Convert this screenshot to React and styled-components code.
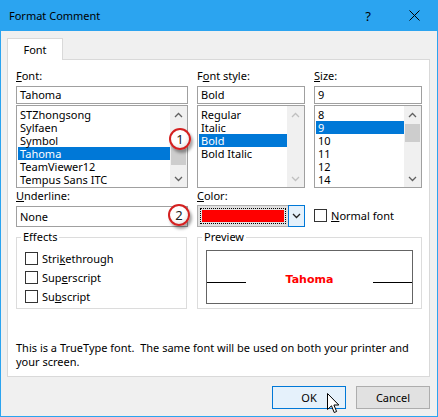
import React from "react";
import styled, { createGlobalStyle } from "styled-components";

const GlobalStyle = createGlobalStyle`
  * { box-sizing: border-box; }
  html, body { margin: 0; padding: 0; background: #fff; }
  body {
    font-family: "Noto Sans", "Open Sans", sans-serif;
    font-size: 11px;
    color: #000;
  }
`;

const Window = styled.div`
  position: relative;
  width: 438px;
  height: 417px;
  display: flex;
  flex-direction: column;
  background: #f0f0f0;
  border: 1px solid #2ba4f0;
  border-top: none;
`;

const TitleBar = styled.div`
  height: 31px;
  flex: none;
  display: flex;
  align-items: center;
  background: #2ba4f0;
  padding-left: 8px;
`;

const Title = styled.div`
  flex: 1;
  font-size: 11px;
  line-height: 31px;
`;

const CaptionButton = styled.div`
  width: 46px;
  height: 31px;
  display: flex;
  align-items: center;
  justify-content: center;
  font-size: 13px;
`;

const Body = styled.div`
  flex: 1;
  display: flex;
  flex-direction: column;
  padding: 7px 7px 0 6px;
`;

const Tab = styled.div`
  position: relative;
  z-index: 1;
  width: 56px;
  height: 22px;
  margin-bottom: -1px;
  background: #fff;
  border: 1px solid #d9d9d9;
  border-bottom: none;
  text-align: center;
  line-height: 22px;
`;

const Panel = styled.div`
  height: 318px;
  background: #fff;
  border: 1px solid #d9d9d9;
  padding: 8px 7px 0 8px;
`;

const Grid = styled.div`
  display: grid;
  grid-template-columns: 172px 108px 108px;
  column-gap: 9px;
`;

const Field = styled.div`
  display: flex;
  flex-direction: column;
`;

const Label = styled.div`
  line-height: 16px;
  margin-bottom: 2px;
  white-space: nowrap;
`;

const Key = styled.span`
  text-decoration: underline;
  text-underline-offset: 1px;
`;

const TextBox = styled.div`
  height: 18px;
  margin-bottom: 1px;
  border: 1px solid #a0a0a0;
  background: #fff;
  padding-left: 3px;
  line-height: 16px;
`;

const ListBox = styled.div`
  height: 83px;
  display: flex;
  border: 1px solid #a0a0a0;
  background: #fff;
`;

const Rows = styled.div`
  flex: 1;
  padding: 2px 0 0 1px;
  overflow: hidden;
`;

const Row = styled.div`
  height: 13px;
  line-height: 13px;
  padding-left: 2px;
  white-space: nowrap;
  background: ${(p) => (p.$selected ? "#0078d7" : "transparent")};
  color: ${(p) => (p.$selected ? "#fff" : "#000")};
`;

const ScrollBar = styled.div`
  width: 17px;
  display: flex;
  flex-direction: column;
  background: #f0f0f0;
`;

const ArrowButton = styled.div`
  height: 17px;
  flex: none;
  display: flex;
  align-items: center;
  justify-content: center;
`;

const Track = styled.div`
  flex: 1;
  padding: ${(p) => p.$offset}px 1px 0;
`;

const Thumb = styled.div`
  height: ${(p) => p.$size}px;
  background: #cdcdcd;
`;

const Combo = styled.div`
  height: 21px;
  border: 1px solid #a0a0a0;
  background: #fff;
  padding-left: 3px;
  line-height: 19px;
`;

const ColorCombo = styled.div`
  height: 22px;
  margin-top: -1px;
  display: flex;
  border: 1px solid #adadad;
  background: #e1e1e1;
`;

const SwatchArea = styled.div`
  flex: 1;
  padding: 2px;
`;

const FocusRect = styled.div`
  height: 100%;
  border: 1px dotted #000;
  padding: 1px;
`;

const Swatch = styled.div`
  height: 100%;
  background: ${(p) => p.$color};
`;

const DropButton = styled.div`
  width: 17px;
  margin: -1px -1px -1px 0;
  display: flex;
  align-items: center;
  justify-content: center;
  border: 1px solid #0078d7;
  background: #e5f1fb;
`;

const CheckRow = styled.label`
  height: 19px;
  display: flex;
  align-items: center;
  gap: 4px;
  white-space: nowrap;
`;

const SideCheck = styled(CheckRow)`
  align-self: end;
  margin-bottom: 2px;
`;

const Box = styled.span`
  width: 13px;
  height: 13px;
  flex: none;
  border: 1px solid #333;
  background: #fff;
`;

const Group = styled.fieldset`
  grid-column: ${(p) => p.$span};
  min-width: 0;
  margin: 3px ${(p) => p.$mr || 0}px 0 0;
  padding: ${(p) => p.$pad};
  border: 1px solid #dcdcdc;
`;

const Legend = styled.legend`
  margin-left: -4px;
  padding: 0 2px;
  line-height: 14px;
`;

const PreviewBox = styled.div`
  height: 54px;
  display: flex;
  align-items: flex-end;
  padding-bottom: 20px;
  border: 1px solid #646464;
`;

const Rule = styled.div`
  width: 39px;
  height: 1px;
  flex: none;
  background: #000;
`;

const Sample = styled.div`
  flex: 1;
  text-align: center;
  margin-bottom: -3px;
  font-family: "DejaVu Sans", Verdana, sans-serif;
  font-weight: bold;
  font-size: 11px;
  line-height: 13px;
  color: ${(p) => p.$color};
`;

const Note = styled.p`
  margin: 32px 0 0;
  line-height: 14px;
`;

const ButtonRow = styled.div`
  display: flex;
  justify-content: flex-end;
  gap: 10px;
  margin-top: 9px;
`;

const Button = styled.div`
  width: 74px;
  height: 23px;
  display: flex;
  align-items: center;
  justify-content: center;
  border: 1px solid ${(p) => (p.$default ? "#0078d7" : "#adadad")};
  background: ${(p) => (p.$default ? "#e5f1fb" : "#e1e1e1")};
`;

const Callout = styled.div`
  position: absolute;
  left: ${(p) => p.$x}px;
  top: ${(p) => p.$y}px;
  width: 22px;
  height: 22px;
  border-radius: 50%;
  border: 2px solid #d42020;
  background: radial-gradient(circle at 40% 35%, #fff 45%, #d8d8d8 100%);
  box-shadow: 2px 3px 3px rgba(0, 0, 0, 0.35);
  display: flex;
  align-items: center;
  justify-content: center;
  font-size: 13px;
  line-height: 1;
  color: #222;
`;

const Cursor = styled.svg`
  position: absolute;
  left: 326px;
  top: 393px;
`;

const Chevron = ({ up, color = "#606060" }) => (
  <svg width="9" height="6" viewBox="0 0 9 6">
    <polyline
      points={up ? "1,5 4.5,1.5 8,5" : "1,1 4.5,4.5 8,1"}
      fill="none"
      stroke={color}
      strokeWidth="1.3"
    />
  </svg>
);

const List = ({ items, selected, thumb, disabled }) => (
  <ListBox>
    <Rows>
      {items.map((item) => (
        <Row key={item} $selected={item === selected}>
          {item}
        </Row>
      ))}
    </Rows>
    <ScrollBar>
      <ArrowButton>
        <Chevron up color={disabled ? "#c0c0c0" : "#606060"} />
      </ArrowButton>
      <Track $offset={thumb ? thumb[0] : 0}>
        {thumb && <Thumb $size={thumb[1]} />}
      </Track>
      <ArrowButton>
        <Chevron color={disabled ? "#c0c0c0" : "#606060"} />
      </ArrowButton>
    </ScrollBar>
  </ListBox>
);

const Check = ({ children }) => (
  <CheckRow>
    <Box />
    <span>{children}</span>
  </CheckRow>
);

const fonts = ["STZhongsong", "Sylfaen", "Symbol", "Tahoma", "TeamViewer12", "Tempus Sans ITC"];
const styles = ["Regular", "Italic", "Bold", "Bold Italic"];
const sizes = ["8", "9", "10", "11", "12", "14"];

export default function App() {
  return (
    <>
      <GlobalStyle />
      <Window>
        <TitleBar>
          <Title>Format Comment</Title>
          <CaptionButton>?</CaptionButton>
          <CaptionButton>
            <svg width="11" height="11" viewBox="0 0 11 11">
              <path d="M0.5 0.5 L10.5 10.5 M10.5 0.5 L0.5 10.5" stroke="#000" strokeWidth="1" />
            </svg>
          </CaptionButton>
        </TitleBar>

        <Body>
          <Tab>Font</Tab>
          <Panel>
            <Grid>
              <Field>
                <Label>
                  <Key>F</Key>ont:
                </Label>
                <TextBox>Tahoma</TextBox>
                <List items={fonts} selected="Tahoma" thumb={[17, 25]} />
              </Field>
              <Field>
                <Label>
                  F<Key>o</Key>nt style:
                </Label>
                <TextBox>Bold</TextBox>
                <List items={styles} selected="Bold" disabled />
              </Field>
              <Field>
                <Label>
                  <Key>S</Key>ize:
                </Label>
                <TextBox>9</TextBox>
                <List items={sizes} selected="9" thumb={[1, 18]} />
              </Field>

              <Field>
                <Label>
                  <Key>U</Key>nderline:
                </Label>
                <Combo>None</Combo>
              </Field>
              <Field>
                <Label>
                  <Key>C</Key>olor:
                </Label>
                <ColorCombo>
                  <SwatchArea>
                    <FocusRect>
                      <Swatch $color="#ff0000" />
                    </FocusRect>
                  </SwatchArea>
                  <DropButton>
                    <Chevron color="#222" />
                  </DropButton>
                </ColorCombo>
              </Field>
              <SideCheck>
                <Box />
                <span>
                  <Key>N</Key>ormal font
                </span>
              </SideCheck>

              <Group $span="1" $pad="5px 8px 2px" $mr={1}>
                <Legend>Effects</Legend>
                <Check>
                  Stri<Key>k</Key>ethrough
                </Check>
                <Check>
                  Sup<Key>e</Key>rscript
                </Check>
                <Check>
                  Su<Key>b</Key>script
                </Check>
              </Group>
              <Group $span="2 / 4" $pad="6px 8px 4px">
                <Legend>Preview</Legend>
                <PreviewBox>
                  <Rule />
                  <Sample $color="#ff0000">Tahoma</Sample>
                  <Rule />
                </PreviewBox>
              </Group>
            </Grid>
            <Note>
              This is a TrueType font.&nbsp; The same font will be used on both your printer and
              your screen.
            </Note>
          </Panel>

          <ButtonRow>
            <Button $default>OK</Button>
            <Button>Cancel</Button>
          </ButtonRow>
        </Body>

        <Callout $x={168} $y={128}>1</Callout>
        <Callout $x={167} $y={204}>2</Callout>

        <Cursor width="13" height="21" viewBox="0 0 13 21">
          <path
            d="M0.5 0.5 L0.5 16.5 L4.5 12.8 L7.2 19.5 L9.6 18.5 L6.9 12 L11.8 12 Z"
            fill="#fff"
            stroke="#000"
            strokeWidth="1"
            strokeLinejoin="miter"
          />
        </Cursor>
      </Window>
    </>
  );
}
